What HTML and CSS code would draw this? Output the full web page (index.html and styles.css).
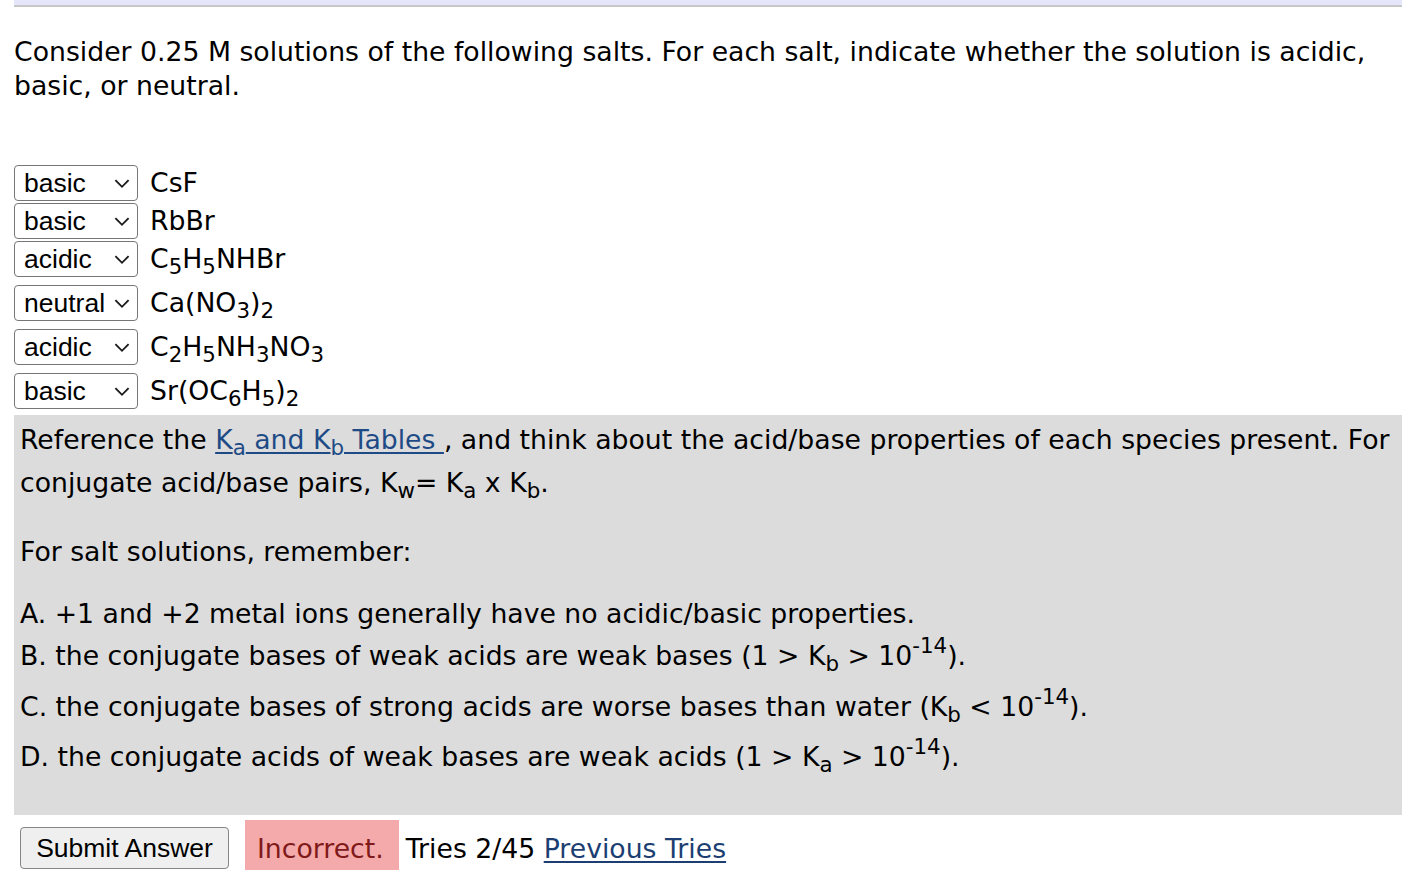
FILE: index.html
```html
<!DOCTYPE html>
<html>
<head>
<meta charset="utf-8">
<link rel="stylesheet" href="styles.css">
</head>
<body>
<div class="topbar"></div>
<p class="prompt">Consider 0.25 M solutions of the following salts. For each salt, indicate whether the solution is acidic, basic, or neutral.</p>

<div class="rows">
  <div class="row">
    <span class="sel"><select><option>basic</option></select><svg class="chev" viewBox="0 0 16 10"><path d="M2 2 L8 8 L14 2"/></svg></span>
    <span class="formula">CsF</span>
  </div>
  <div class="row">
    <span class="sel"><select><option>basic</option></select><svg class="chev" viewBox="0 0 16 10"><path d="M2 2 L8 8 L14 2"/></svg></span>
    <span class="formula">RbBr</span>
  </div>
  <div class="row tall">
    <span class="sel"><select><option>acidic</option></select><svg class="chev" viewBox="0 0 16 10"><path d="M2 2 L8 8 L14 2"/></svg></span>
    <span class="formula">C<sub>5</sub>H<sub>5</sub>NHBr</span>
  </div>
  <div class="row tall">
    <span class="sel"><select><option>neutral</option></select><svg class="chev" viewBox="0 0 16 10"><path d="M2 2 L8 8 L14 2"/></svg></span>
    <span class="formula">Ca(NO<sub>3</sub>)<sub>2</sub></span>
  </div>
  <div class="row tall">
    <span class="sel"><select><option>acidic</option></select><svg class="chev" viewBox="0 0 16 10"><path d="M2 2 L8 8 L14 2"/></svg></span>
    <span class="formula">C<sub>2</sub>H<sub>5</sub>NH<sub>3</sub>NO<sub>3</sub></span>
  </div>
  <div class="row tall last">
    <span class="sel"><select><option>basic</option></select><svg class="chev" viewBox="0 0 16 10"><path d="M2 2 L8 8 L14 2"/></svg></span>
    <span class="formula">Sr(OC<sub>6</sub>H<sub>5</sub>)<sub>2</sub></span>
  </div>
</div>

<div class="hint">
  <p class="ref">Reference the <a href="#">K<sub>a</sub> and K<sub>b</sub> Tables </a>, and think about the acid/base properties of each species present. For conjugate acid/base pairs, K<sub>w</sub>= K<sub>a</sub> x K<sub>b</sub>.</p>
  <p class="remember">For salt solutions, remember:</p>
  <p class="item item-a">A. +1 and +2 metal ions generally have no acidic/basic properties.</p>
  <p class="item item-b">B. the conjugate bases of weak acids are weak bases (1 &gt; K<sub>b</sub> &gt; 10<sup>-14</sup>).</p>
  <p class="item item-c">C. the conjugate bases of strong acids are worse bases than water (K<sub>b</sub> &lt; 10<sup>-14</sup>).</p>
  <p class="item item-d">D. the conjugate acids of weak bases are weak acids (1 &gt; K<sub>a</sub> &gt; 10<sup>-14</sup>).</p>
</div>

<div class="actions">
  <button class="submit">Submit Answer</button>
  <span class="incorrect">Incorrect.</span>
  <span class="tries">Tries 2/45 <a href="#">Previous Tries</a></span>
</div>
</body>
</html>
```

FILE: styles.css
```css
html, body {
  margin: 0;
  padding: 0;
  background: #ffffff;
}
body {
  font-family: "DejaVu Sans", Verdana, sans-serif;
  font-size: 26.7px;
  color: #000;
  overflow: hidden;
}
.topbar {
  margin-left: 14px;
  height: 5px;
  background: #e6e6fa;
  border-bottom: 2px solid #c8c8c8;
}
.prompt {
  margin: 28px 0 0 14px;
  line-height: 34px;
}
.rows {
  margin: 62px 0 0 14px;
  display: flex;
  flex-direction: column;
}
.row {
  display: flex;
  align-items: flex-start;
  height: 38px;
}
.row.tall {
  height: 44px;
}
.row.last {
  height: 42px;
}
.sel {
  position: relative;
  display: inline-block;
  width: 124px;
  height: 36px;
}
.sel select {
  appearance: none;
  -webkit-appearance: none;
  width: 124px;
  height: 36px;
  margin: 0;
  padding: 0 0 0 9px;
  border: 1px solid #767676;
  border-radius: 4px;
  background: #fff;
  font-family: "Liberation Sans", Arial, sans-serif;
  font-size: 26.5px;
  color: #000;
}
.chev {
  position: absolute;
  right: 7px;
  top: 13px;
  width: 18px;
  height: 11px;
  fill: none;
  stroke: #1a1a1a;
  stroke-width: 1.7;
}
.formula {
  margin-left: 12px;
  line-height: 36px;
}
sub, sup {
  font-size: 0.8em;
  line-height: 1;
}
sub {
  vertical-align: -0.3em;
}
sup {
  vertical-align: 0.55em;
}
.hint {
  margin: 0 0 0 14px;
  background: #dcdcdc;
  padding: 3px 6px 33px 6px;
}
.hint p {
  margin: 0;
}
.ref {
  line-height: 43px;
}
.ref a {
  color: #1e4b86;
  text-decoration: underline;
  text-underline-offset: 3px;
}
.remember {
  line-height: 43px;
  margin-top: 26px !important;
}
.item {
  line-height: 42px;
}
.item-a {
  margin-top: 20px !important;
}
.item-c {
  line-height: 50px;
  margin-top: 5px !important;
}
.item-d {
  line-height: 50px;
}
.actions {
  margin: 5px 0 0 20px;
  display: flex;
  align-items: flex-start;
  height: 51px;
}
.submit {
  margin: 7px 0 0 0;
  width: 209px;
  height: 42px;
  padding: 0;
  font-family: "Liberation Sans", Arial, sans-serif;
  font-size: 26.5px;
  color: #000;
  background: #efefef;
  border: 1px solid #858585;
  border-radius: 4px;
}
.incorrect {
  margin-left: 16px;
  height: 51px;
  line-height: 58px;
  padding: 0 15px 0 12px;
  background: #f4aaaa;
  color: #801919;
}
.tries {
  margin-left: 7px;
  line-height: 58px;
}
.tries a {
  color: #1c3e72;
  text-decoration: underline;
  text-underline-offset: 3px;
}
```
